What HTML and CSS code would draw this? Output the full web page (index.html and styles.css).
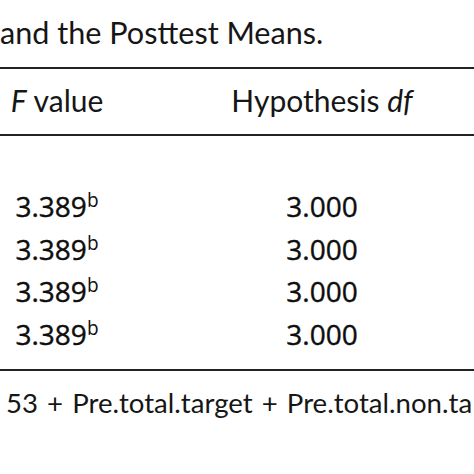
FILE: index.html
```html
<!doctype html>
<html lang="en">
    <head>
        <meta charset="UTF-8" />
        <title>Multivariate Tests</title>
        <link rel="stylesheet" href="styles.css">
    </head>
    <body>
        <p class="caption">and the Posttest Means.</p>

        <div class="rule"></div>

        <div class="table-head">
            <div class="cell"><i>F</i> value</div>
            <div class="cell wide">Hypothesis <i>df</i></div>
        </div>

        <div class="rule"></div>

        <div class="table-body">
            <div class="cell num">3.389<sup>b</sup></div>
            <div class="cell num wide">3.000</div>
            <div class="cell num">3.389<sup>b</sup></div>
            <div class="cell num wide">3.000</div>
            <div class="cell num">3.389<sup>b</sup></div>
            <div class="cell num wide">3.000</div>
            <div class="cell num">3.389<sup>b</sup></div>
            <div class="cell num wide">3.000</div>
        </div>

        <div class="rule"></div>

        <p class="note">53 + Pre.total.target + Pre.total.non.ta</p>
    </body>
</html>
```

FILE: styles.css
```css
body {
    margin: 0;
    width: 474px;
    height: 474px;
    overflow: hidden;
    background: #fff;
    color: #161616;
    font-family: Lato, "Open Sans", sans-serif;
    font-size: 30px;
    line-height: 42px;
}

.caption {
    margin: 0;
    padding-top: 12px;
    font-size: 30.6px;
    white-space: nowrap;
}

.rule {
    width: 100%;
    height: 2px;
    background: #222;
}

.caption + .rule {
    margin-top: 13px;
}

.table-head,
.table-body {
    display: grid;
    grid-template-columns: 114px 1fr;
    text-align: center;
    white-space: nowrap;
}

.table-head {
    padding: 10px 0 13px;
}

.table-body {
    padding: 49px 0 14px;
    line-height: 42.5px;
}

.wide {
    padding-left: 56px;
}

.num {
    font-family: "Open Sans", sans-serif;
    font-size: 28px;
    color: #0e0e0e;
    -webkit-text-stroke: 0.4px #0e0e0e;
}

.num sup {
    font-size: 0.68em;
    line-height: 0;
    vertical-align: 0.5em;
    -webkit-text-stroke: 0;
}

.note {
    margin: 0;
    padding: 11px 0 0 6px;
    font-size: 27.6px;
    white-space: nowrap;
    word-spacing: 2px;
}
```
